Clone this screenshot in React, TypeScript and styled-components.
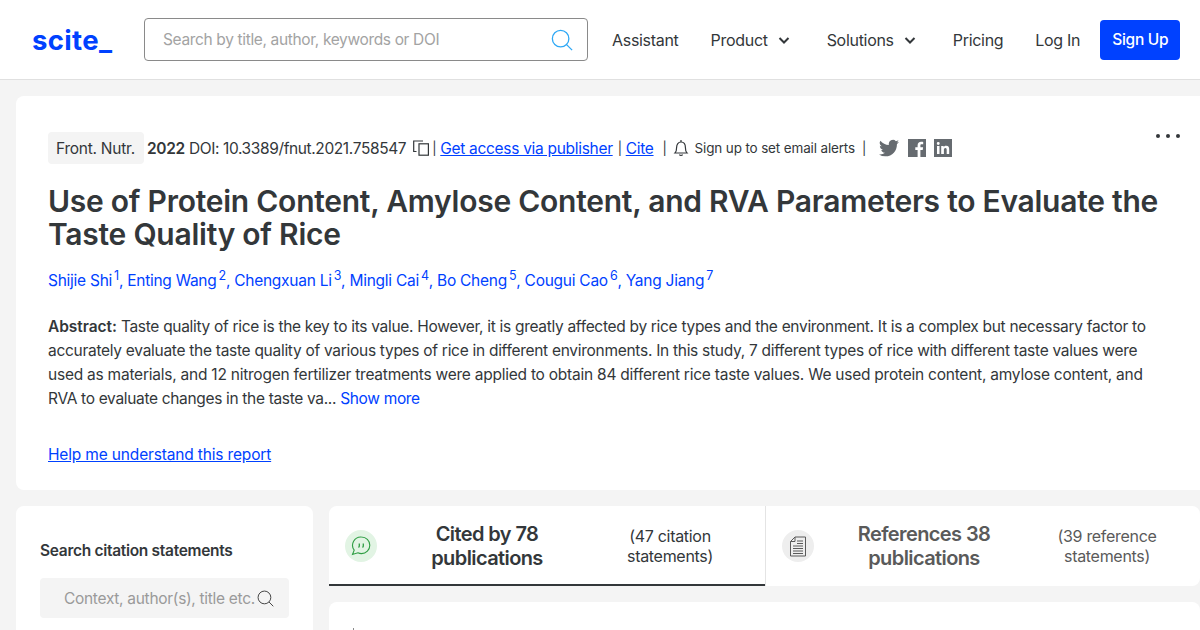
import styled, { createGlobalStyle } from 'styled-components';

const FONT = `Inter, 'Liberation Sans', sans-serif`;
const BLUE = '#0041ff';
const INK = '#33373a';

const GlobalStyle = createGlobalStyle`
    html, body {
        margin: 0;
        padding: 0;
        height: 630px;
        overflow: hidden;
        background: #f4f4f4;
        font-family: ${FONT};
    }
    * {
        box-sizing: border-box;
    }
`;

const Header = styled.header`
    height: 80px;
    background: #fff;
    border-bottom: 1px solid #e0e0e0;
    display: flex;
    align-items: center;
    padding: 0 20px 0 32px;
`;

const Logo = styled.div`
    width: 112px;
    flex: none;
    font-size: 27.5px;
    font-weight: 700;
    letter-spacing: 0.35px;
    color: ${BLUE};
`;

const SearchBox = styled.div`
    width: 444px;
    height: 43px;
    flex: none;
    border: 1px solid #8a8a8a;
    border-radius: 4px;
    display: flex;
    align-items: center;
    justify-content: space-between;
    padding: 0 14px 0 18px;
    font-size: 15.5px;
    letter-spacing: -0.35px;
    color: #a3a3a3;
`;

const Nav = styled.nav`
    flex: 1;
    display: flex;
    align-items: center;
    gap: 32px;
    margin-left: 24px;
    padding-top: 1px;
    font-size: 16px;
    letter-spacing: -0.3px;
    white-space: nowrap;
    color: ${INK};
`;

const NavItem = styled.span<{ $menu?: boolean }>`
    display: flex;
    align-items: center;
    gap: 9px;
    padding-right: ${(props) => (props.$menu ? 4 : 0)}px;
`;

const SignUp = styled.button`
    width: 80px;
    height: 40px;
    flex: none;
    margin: -1px 0 0 -12px;
    padding: 0;
    border: none;
    border-radius: 4px;
    background: ${BLUE};
    color: #fff;
    font-family: ${FONT};
    font-size: 15.5px;
    font-weight: 500;
    letter-spacing: -0.3px;
`;

const Main = styled.main`
    padding: 16px 0 0 16px;
    display: flex;
    flex-direction: column;
    gap: 16px;
`;

const ReportCard = styled.section`
    position: relative;
    height: 394px;
    background: #fff;
    border-radius: 8px 0 0 8px;
    padding: 36px 32px 0;
    color: ${INK};
`;

const MetaRow = styled.div`
    display: flex;
    align-items: center;
    height: 32px;
    font-size: 15.5px;
    letter-spacing: -0.3px;
    white-space: nowrap;
`;

const Journal = styled.span`
    background: #f4f4f4;
    border-radius: 4px;
    padding: 8px 9px 6px 8px;
    margin-right: 3px;
    line-height: 18px;
    letter-spacing: -0.25px;
`;

const Year = styled.strong`
    font-weight: 600;
    margin-right: 4px;
`;

const Doi = styled.span`
    letter-spacing: -0.38px;
`;

const TextLink = styled.a`
    color: ${BLUE};
    text-decoration: underline;
`;

const Pipe = styled.span<{ $left?: number; $right?: number }>`
    font-size: 13px;
    margin-left: ${(props) => props.$left ?? 0}px;
    margin-right: ${(props) => props.$right ?? 0}px;
`;

const IconSlot = styled.span<{ $left: number; $right: number }>`
    display: flex;
    margin-left: ${(props) => props.$left}px;
    margin-right: ${(props) => props.$right}px;
`;

const AlertText = styled.span`
    font-size: 13.5px;
    letter-spacing: -0.15px;
`;

const Socials = styled.span`
    display: flex;
    align-items: center;
    gap: 8.5px;
    margin-left: 13px;
`;

const MoreDots = styled.div`
    position: absolute;
    top: 38px;
    right: 20px;
    display: flex;
    gap: 6px;
    span {
        width: 4px;
        height: 4px;
        border-radius: 50%;
        background: ${INK};
    }
`;

const Title = styled.h1`
    margin: 21px 0 0;
    font-size: 30px;
    line-height: 33px;
    font-weight: 600;
    letter-spacing: -0.25px;
    color: ${INK};
`;

const Authors = styled.div`
    margin-top: 18px;
    font-size: 15.5px;
    line-height: 24px;
    letter-spacing: -0.26px;
    color: ${BLUE};
    sup {
        font-size: 12.5px;
        line-height: 0;
        margin-left: 2px;
    }
`;

const Abstract = styled.div`
    margin-top: 22px;
    font-size: 15.5px;
    line-height: 24px;
    b {
        font-weight: 600;
        letter-spacing: -0.05px;
    }
    a {
        color: ${BLUE};
    }
`;

const AbstractLine = styled.span<{ $spacing: number }>`
    display: block;
    white-space: nowrap;
    letter-spacing: ${(props) => props.$spacing}px;
`;

const HelpLink = styled(TextLink)`
    display: block;
    margin-top: 32px;
    font-size: 15.5px;
    line-height: 24px;
    letter-spacing: -0.16px;
`;

const LowerRow = styled.div`
    display: flex;
    gap: 16px;
    align-items: flex-start;
`;

const Sidebar = styled.aside`
    width: 297px;
    height: 124px;
    background: #fff;
    border-radius: 8px 8px 0 0;
    padding: 36px 24px 0;
`;

const SidebarTitle = styled.div`
    font-size: 15.5px;
    line-height: 18px;
    font-weight: 600;
    letter-spacing: -0.3px;
    color: ${INK};
`;

const SidebarSearch = styled.div`
    margin-top: 18px;
    height: 40px;
    background: #f4f4f4;
    border-radius: 4px;
    display: flex;
    align-items: center;
    justify-content: space-between;
    padding: 0 15px 0 24px;
    font-size: 15.5px;
    letter-spacing: -0.3px;
    color: #9a9a9a;
    white-space: nowrap;
`;

const Results = styled.div`
    flex: 1;
    display: flex;
    flex-direction: column;
    gap: 16px;
`;

const Tabs = styled.div`
    display: flex;
    height: 80px;
`;

const Tab = styled.div<{ $active?: boolean }>`
    width: ${(props) => (props.$active ? 436 : 435)}px;
    display: flex;
    align-items: center;
    background: #fff;
    padding-left: 16px;
    padding-top: ${(props) => (props.$active ? 2 : 0)}px;
    color: ${(props) => (props.$active ? INK : '#5a5a5a')};
    border-radius: ${(props) => (props.$active ? '8px 0 0 0' : '0 8px 8px 0')};
    border-bottom: ${(props) => (props.$active ? `2px solid ${INK}` : 'none')};
    border-left: ${(props) => (props.$active ? 'none' : '1px solid #e4e4e4')};
`;

const TabIcon = styled.span<{ $bg: string }>`
    width: 32px;
    height: 32px;
    flex: none;
    border-radius: 50%;
    background: ${(props) => props.$bg};
    display: flex;
    align-items: center;
    justify-content: center;
`;

const TabTitle = styled.div`
    width: 220px;
    flex: none;
    text-align: center;
    font-size: 20px;
    line-height: 24px;
    font-weight: 600;
    letter-spacing: -0.6px;
`;

const TabNote = styled.div`
    width: 120px;
    flex: none;
    margin-left: 13px;
    text-align: center;
    font-size: 16px;
    line-height: 20px;
    letter-spacing: -0.3px;
`;

const ResultCard = styled.div`
    height: 28px;
    background: #fff;
    border-radius: 8px 8px 0 0;
    padding: 26px 0 0 24px;
`;

const LoadingDot = styled.span`
    display: block;
    width: 1px;
    height: 2px;
    background: #8a8a8a;
`;

const SearchIcon = ({ size, color }: { size: number; color: string }) => (
    <svg width={size} height={size} viewBox="0 0 24 24" fill="none" stroke={color} strokeWidth="1.4">
        <circle cx="10.5" cy="10.5" r="9" />
        <path d="M17 17l6 6" />
    </svg>
);

const Caret = () => (
    <svg width="14" height="14" viewBox="0 0 14 14" fill="none" stroke={INK} strokeWidth="2">
        <path d="M2.5 5l4.5 4.5L11.5 5" />
    </svg>
);

const CopyIcon = () => (
    <svg width="16" height="16" viewBox="0 0 16 16" fill="none" stroke={INK} strokeWidth="1.2">
        <path d="M10 1H.7v10.500H3.500" />
        <rect x="6" y="3.800" width="9.400" height="11.400" />
    </svg>
);

const BellIcon = () => (
    <svg width="16" height="18" viewBox="0 0 16 18" fill="none" stroke={INK} strokeWidth="1.2">
        <path d="M2 14c1.300-1.300 1.600-2.600 1.600-5.500C3.600 5.400 5.300 3 8 3s4.400 2.400 4.400 5.500c0 2.900.3 4.200 1.600 5.500z" />
        <path d="M8 1v2M6.500 15.500c.3 1.300 2.700 1.300 3 0" />
    </svg>
);

const TwitterIcon = () => (
    <svg width="20" height="20" viewBox="0 0 24 24" fill="#666b70">
        <path d="M24 4.600c-.9.400-1.800.7-2.800.8 1-.6 1.800-1.600 2.200-2.700-1 .6-2 1-3.100 1.200A4.900 4.900 0 0 0 11.900 8.400C7.800 8.200 4.200 6.200 1.700 3.200a4.900 4.900 0 0 0 1.500 6.600c-.8 0-1.600-.2-2.200-.6 0 2.400 1.700 4.500 3.900 5-.7.2-1.500.2-2.200.1.600 2 2.400 3.400 4.600 3.400A9.900 9.900 0 0 1 0 19.700 14 14 0 0 0 7.500 22c9.100 0 14.300-7.700 14-14.600 1-.7 1.800-1.600 2.500-2.800z" />
    </svg>
);

const FacebookIcon = () => (
    <svg width="18" height="18" viewBox="0 0 18 18">
        <rect width="18" height="18" fill="#666b70" />
        <path d="M12.400 18v-7h2.300l.4-2.700h-2.700V6.600c0-.8.200-1.300 1.300-1.300h1.500V2.900c-.3 0-1.100-.1-2.100-.1-2.100 0-3.500 1.300-3.500 3.600v1.900H7.300V11h2.300v7z" fill="#fff" />
    </svg>
);

const LinkedinIcon = () => (
    <svg width="18" height="18" viewBox="0 0 18 18">
        <rect width="18" height="18" fill="#666b70" />
        <path d="M3 7h2.500v8H3zM4.250 3a1.400 1.400 0 1 1 0 2.900 1.400 1.400 0 0 1 0-2.900zM7.200 7h2.400v1.100c.4-.7 1.300-1.300 2.500-1.300 2.600 0 3.100 1.600 3.100 3.800V15h-2.500v-3.900c0-1 0-2.200-1.300-2.200s-1.500 1-1.500 2.100v4H7.200z" fill="#fff" />
    </svg>
);

const QuoteBubble = () => (
    <svg width="20" height="20" viewBox="0 0 20 20" fill="none" stroke="#2f9e44" strokeWidth="1.1">
        <path d="M10.500 1a8.300 8.300 0 0 1 0 16.600c-1.300 0-2.500-.3-3.600-.8l-5.400 1.700 1.700-4.300A8.300 8.300 0 0 1 10.500 1z" />
        <path d="M8.300 7.500v2.400c0 .7-.3 1.200-.9 1.500M12.300 7.500v2.400c0 .7-.3 1.200-.9 1.500" strokeWidth="1.300" />
    </svg>
);

const DocIcon = () => (
    <svg width="18" height="21" viewBox="0 0 18 21" fill="none" stroke="#5a5a5a" strokeWidth="1">
        <path d="M6 1h10.500v19h-15V5.500zM6 1v4.500H1.500" />
        <path d="M8 5h6M8 7.500h6M4 10h10M4 12.500h10M4 15h10M4 17.500h10" />
    </svg>
);

const AUTHORS = [
    'Shijie Shi',
    'Enting Wang',
    'Chengxuan Li',
    'Mingli Cai',
    'Bo Cheng',
    'Cougui Cao',
    'Yang Jiang',
];

export default function App() {
    return (
        <>
            <GlobalStyle />
            <Header>
                <Logo>scite_</Logo>
                <SearchBox>
                    Search by title, author, keywords or DOI
                    <SearchIcon size={22} color="#2ea8f5" />
                </SearchBox>
                <Nav>
                    <NavItem>Assistant</NavItem>
                    <NavItem $menu>
                        Product <Caret />
                    </NavItem>
                    <NavItem $menu>
                        Solutions <Caret />
                    </NavItem>
                    <NavItem>Pricing</NavItem>
                    <NavItem>Log In</NavItem>
                    <SignUp>Sign Up</SignUp>
                </Nav>
            </Header>
            <Main>
                <ReportCard>
                    <MoreDots>
                        <span />
                        <span />
                        <span />
                    </MoreDots>
                    <MetaRow>
                        <Journal>Front. Nutr.</Journal>
                        <Year>2022</Year>
                        <Doi>DOI: 10.3389/fnut.2021.758547</Doi>
                        <IconSlot $left={7} $right={0}>
                            <CopyIcon />
                        </IconSlot>
                        <Pipe $left={3} $right={4}>
                            |
                        </Pipe>
                        <TextLink>Get access via publisher</TextLink>
                        <Pipe $left={5} $right={4}>
                            |
                        </Pipe>
                        <TextLink>Cite</TextLink>
                        <Pipe $left={9} $right={5}>
                            |
                        </Pipe>
                        <IconSlot $left={1} $right={6}>
                            <BellIcon />
                        </IconSlot>
                        <AlertText>Sign up to set email alerts</AlertText>
                        <Pipe $left={7}>|</Pipe>
                        <Socials>
                            <TwitterIcon />
                            <FacebookIcon />
                            <LinkedinIcon />
                        </Socials>
                    </MetaRow>
                    <Title>Use of Protein Content, Amylose Content, and RVA Parameters to Evaluate the Taste Quality of Rice</Title>
                    <Authors>
                        {AUTHORS.map((name, i) => (
                            <span key={name}>
                                {name}
                                <sup>{i + 1}</sup>
                                {i < AUTHORS.length - 1 && ', '}
                            </span>
                        ))}
                    </Authors>
                    <Abstract>
                        <AbstractLine $spacing={-0.305}>
                            <b>Abstract:</b> Taste quality of rice is the key to its value. However, it is greatly affected by rice types and the environment. It is a complex but necessary factor to
                        </AbstractLine>
                        <AbstractLine $spacing={-0.285}>
                            accurately evaluate the taste quality of various types of rice in different environments. In this study, 7 different types of rice with different taste values were
                        </AbstractLine>
                        <AbstractLine $spacing={-0.235}>
                            used as materials, and 12 nitrogen fertilizer treatments were applied to obtain 84 different rice taste values. We used protein content, amylose content, and
                        </AbstractLine>
                        <AbstractLine $spacing={-0.33}>
                            RVA to evaluate changes in the taste va... <a>Show more</a>
                        </AbstractLine>
                    </Abstract>
                    <HelpLink>Help me understand this report</HelpLink>
                </ReportCard>
                <LowerRow>
                    <Sidebar>
                        <SidebarTitle>Search citation statements</SidebarTitle>
                        <SidebarSearch>
                            Context, author(s), title etc.
                            <SearchIcon size={17} color="#444" />
                        </SidebarSearch>
                    </Sidebar>
                    <Results>
                        <Tabs>
                            <Tab $active>
                                <TabIcon $bg="#e2f4e4">
                                    <QuoteBubble />
                                </TabIcon>
                                <TabTitle>
                                    Cited by 78
                                    <br />
                                    publications
                                </TabTitle>
                                <TabNote>
                                    (47 citation
                                    <br />
                                    statements)
                                </TabNote>
                            </Tab>
                            <Tab>
                                <TabIcon $bg="#eeeeee">
                                    <DocIcon />
                                </TabIcon>
                                <TabTitle>
                                    References 38
                                    <br />
                                    publications
                                </TabTitle>
                                <TabNote>
                                    (39 reference
                                    <br />
                                    statements)
                                </TabNote>
                            </Tab>
                        </Tabs>
                        <ResultCard>
                            <LoadingDot />
                        </ResultCard>
                    </Results>
                </LowerRow>
            </Main>
        </>
    );
}
